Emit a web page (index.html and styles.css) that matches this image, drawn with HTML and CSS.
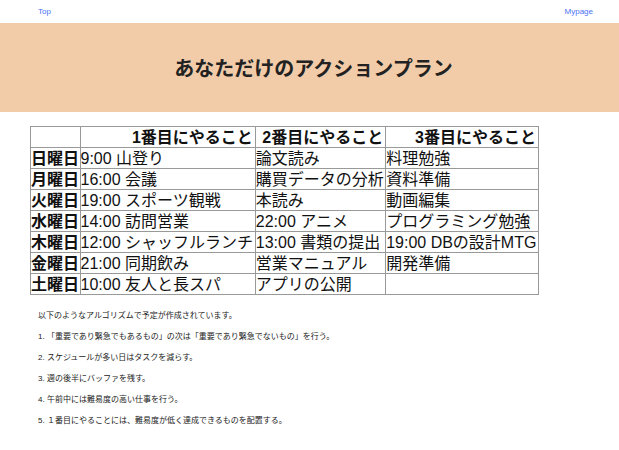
FILE: index.html
```html
<!DOCTYPE html>
<html lang="ja">
<head>
<meta charset="utf-8">
<link rel="stylesheet" href="styles.css">
</head>
<body>
<nav class="nav">
  <a class="nav-link" href="#">Top</a>
  <a class="nav-link" href="#">Mypage</a>
</nav>
<header class="hero">
  <h1 class="hero-title">あなただけのアクションプラン</h1>
</header>
<main class="main">
  <table class="plan">
    <thead>
      <tr><th></th><th>1番目にやること</th><th>2番目にやること</th><th>3番目にやること</th></tr>
    </thead>
    <tbody>
      <tr><th>日曜日</th><td>9:00 山登り</td><td>論文読み</td><td>料理勉強</td></tr>
      <tr><th>月曜日</th><td>16:00 会議</td><td>購買データの分析</td><td>資料準備</td></tr>
      <tr><th>火曜日</th><td>19:00 スポーツ観戦</td><td>本読み</td><td>動画編集</td></tr>
      <tr><th>水曜日</th><td>14:00 訪問営業</td><td>22:00 アニメ</td><td>プログラミング勉強</td></tr>
      <tr><th>木曜日</th><td>12:00 シャッフルランチ</td><td>13:00 書類の提出</td><td>19:00 DBの設計MTG</td></tr>
      <tr><th>金曜日</th><td>21:00 同期飲み</td><td>営業マニュアル</td><td>開発準備</td></tr>
      <tr><th>土曜日</th><td>10:00 友人と長スパ</td><td>アプリの公開</td><td></td></tr>
    </tbody>
  </table>
  <div class="notes">
    <p class="note">以下のようなアルゴリズムで予定が作成されています。</p>
    <p class="note">1. 「重要であり緊急でもあるもの」の次は「重要であり緊急でないもの」を行う。</p>
    <p class="note">2. スケジュールが多い日はタスクを減らす。</p>
    <p class="note">3. 週の後半にバッファを残す。</p>
    <p class="note">4. 午前中には難易度の高い仕事を行う。</p>
    <p class="note">5. １番目にやることには、難易度が低く達成できるものを配置する。</p>
  </div>
</main>
</body>
</html>
```
FILE: styles.css
```css
* { box-sizing: border-box; }
body {
  margin: 0;
  font-family: "Liberation Sans", "Noto Sans CJK JP", sans-serif;
  color: #111;
  background: #fff;
}
.nav {
  display: flex;
  justify-content: space-between;
  align-items: center;
  height: 23px;
  padding: 0 26px 0 38px;
}
.nav-link {
  font-size: 8px;
  color: #4a72f6;
  text-decoration: none;
}
.hero {
  background: #f2cba8;
  height: 89px;
  display: flex;
  align-items: center;
  justify-content: center;
  padding-left: 8px;
}
.hero-title {
  margin: 0;
  font-size: 20px;
  font-weight: bold;
  color: #222;
}
.main {
  padding: 14px 30px 0 30px;
}
.plan {
  border-collapse: collapse;
  border: 1px solid #666;
  font-size: 16px;
  width: 509px;
}
.plan th, .plan td {
  border: 1px solid #999;
  padding: 0;
  height: 21px;
  line-height: 19px;
  white-space: nowrap;
  text-align: left;
  font-weight: normal;
}
.plan thead th { font-weight: bold; text-align: right; padding-right: 2px; }
.plan tbody th { font-weight: bold; }
.notes {
  padding: 15px 8px 0 8px;
}
.note {
  margin: 0 0 10px 0;
  font-size: 8px;
  line-height: 11px;
  color: #222;
}
```
